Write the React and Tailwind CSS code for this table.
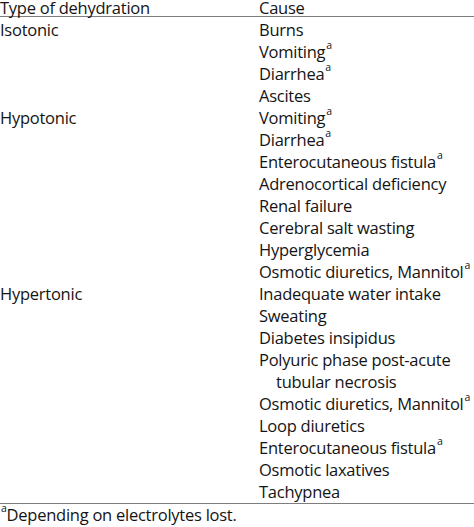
const CAUSES = [
  { type: 'Isotonic', text: 'Burns' },
  { text: 'Vomiting', note: true },
  { text: 'Diarrhea', note: true },
  { text: 'Ascites' },
  { type: 'Hypotonic', text: 'Vomiting', note: true },
  { text: 'Diarrhea', note: true },
  { text: 'Enterocutaneous fistula', note: true },
  { text: 'Adrenocortical deficiency' },
  { text: 'Renal failure' },
  { text: 'Cerebral salt wasting' },
  { text: 'Hyperglycemia' },
  { text: 'Osmotic diuretics, Mannitol', note: true },
  { type: 'Hypertonic', text: 'Inadequate water intake' },
  { text: 'Sweating' },
  { text: 'Diabetes insipidus' },
  { text: 'Polyuric phase post-acute' },
  { text: 'tubular necrosis', indent: true },
  { text: 'Osmotic diuretics, Mannitol', note: true },
  { text: 'Loop diuretics' },
  { text: 'Enterocutaneous fistula', note: true },
  { text: 'Osmotic laxatives' },
  { text: 'Tachypnea' },
]

function Sup() {
  return <sup className="text-[10.5px] relative top-[-1px] align-top leading-none ml-[1px]">a</sup>
}

export default function App() {
  return (
    <div className="w-[474px] h-[527px] overflow-hidden bg-white text-[#141414] text-[16.5px] tracking-[-0.25px] font-['Open_Sans',sans-serif]">
      {/* Header */}
      <div className="grid grid-cols-[259px_1fr] leading-[16px] h-[17px] border-b border-[#7d7d7d]">
        <div>Type of dehydration</div>
        <div>Cause</div>
      </div>

      {/* Rows */}
      <div className="pt-[2px] border-b border-[#7d7d7d]">
        {CAUSES.map((row, i) => (
          <div key={i} className="grid grid-cols-[259px_1fr] leading-[22px] h-[22px]">
            <div>{row.type || ''}</div>
            <div className={`whitespace-nowrap ${row.indent ? 'pl-[17px]' : ''}`}>
              {row.text}
              {row.note && <Sup />}
            </div>
          </div>
        ))}
      </div>

      {/* Footnote */}
      <div className="leading-[22px] whitespace-nowrap">
        <Sup />Depending on electrolytes lost.
      </div>
    </div>
  )
}
